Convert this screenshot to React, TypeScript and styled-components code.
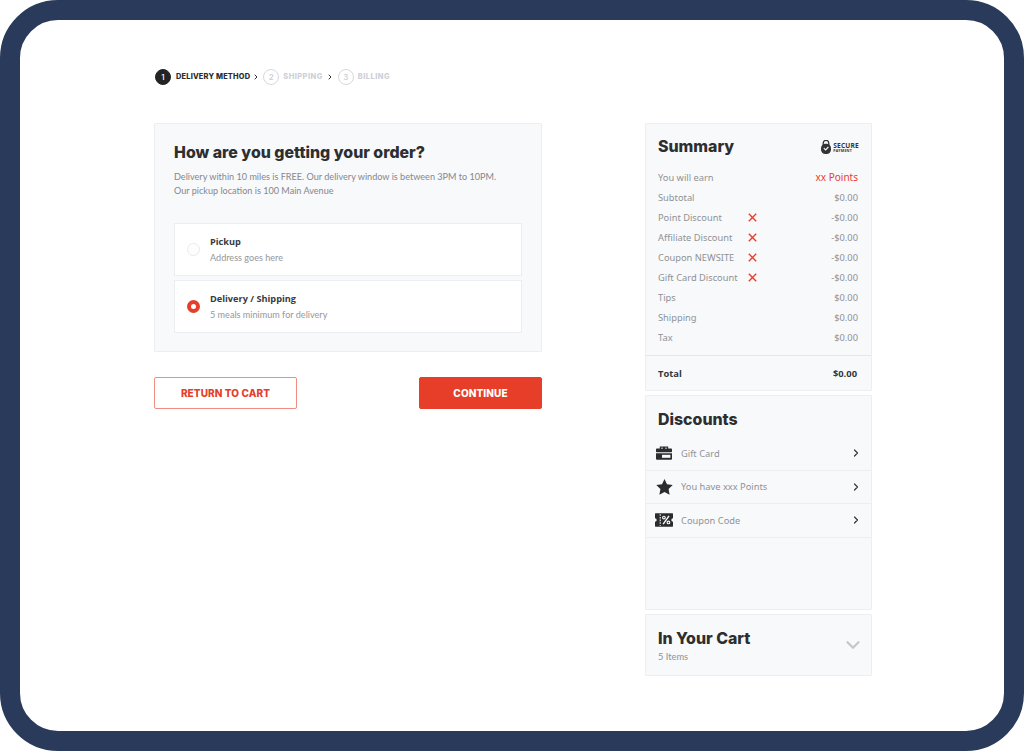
import React from "react";
import styled, { createGlobalStyle } from "styled-components";
import { ChevronDown, ChevronRight } from "lucide-react";

const GlobalStyle = createGlobalStyle`
  html, body {
    margin: 0;
    padding: 0;
    background: #ffffff;
  }
`;

const Frame = styled.div`
  box-sizing: border-box;
  width: 1024px;
  height: 751px;
  border: 20px solid #2a3a5a;
  border-radius: 58px;
  padding: 48px 0 0 134px;
  background: #ffffff;
  font-family: "Lato", sans-serif;
  overflow: hidden;
`;

const Columns = styled.div`
  display: flex;
  align-items: flex-start;
  gap: 103px;
`;

const LeftColumn = styled.div`
  width: 388px;
`;

const RightColumn = styled.div`
  width: 227px;
  margin-top: 55px;
  display: flex;
  flex-direction: column;
  gap: 4px;
`;

const Stepper = styled.div`
  display: flex;
  align-items: center;
  height: 17px;
  margin-bottom: 38px;
`;

const StepNumber = styled.span<{ $active?: boolean }>`
  box-sizing: border-box;
  width: 16px;
  height: 16px;
  margin-left: 1px;
  border-radius: 50%;
  display: flex;
  align-items: center;
  justify-content: center;
  font-size: 8px;
  font-family: "Inter", sans-serif;
  font-weight: 500;
  color: ${(p) => (p.$active ? "#ffffff" : "#c9cbd0")};
  background: ${(p) => (p.$active ? "#232426" : "#ffffff")};
  border: 1px solid ${(p) => (p.$active ? "#232426" : "#d6d8dc")};
`;

const StepLabel = styled.span<{ $active?: boolean }>`
  margin-left: ${(p) => (p.$active ? "5px" : "4px")};
  font-family: "Inter", sans-serif;
  font-size: 7.4px;
  font-weight: 800;
  letter-spacing: ${(p) => (p.$active ? "0.2px" : "0.5px")};
  color: ${(p) => (p.$active ? "#2b2c2e" : "#cdd0d6")};
`;

const StepArrow = styled(ChevronRight)`
  width: 8px;
  height: 8px;
  margin: 0 2px;
  color: #333333;
`;

const WideStepArrow = styled(StepArrow)`
  margin: 0 3px;
`;

const Card = styled.div`
  box-sizing: border-box;
  background: #f8f9fb;
  border: 1px solid #eceef1;
  border-radius: 1px;
`;

const OrderCard = styled(Card)`
  height: 229px;
  padding: 18px 19px;
`;

const Heading = styled.h2`
  margin: 0;
  font-family: "Inter", sans-serif;
  font-weight: 800;
  font-size: 15.9px;
  line-height: 22px;
  color: #2d2e30;
`;

const Description = styled.p`
  margin: 6px 0 25px;
  font-size: 9.1px;
  line-height: 14px;
  color: #85878b;
`;

const OptionList = styled.div`
  display: flex;
  flex-direction: column;
  gap: 4.5px;
`;

const Option = styled.div`
  box-sizing: border-box;
  height: 52.5px;
  background: #ffffff;
  border: 1px solid #eceef1;
  display: flex;
  align-items: center;
  padding-left: 12px;
  gap: 10px;
`;

const Radio = styled.span<{ $checked?: boolean }>`
  box-sizing: border-box;
  flex: none;
  width: 13px;
  height: 13px;
  border-radius: 50%;
  background: ${(p) => (p.$checked ? "#ffffff" : "#fdfdfd")};
  border: ${(p) => (p.$checked ? "4.5px solid #e63e29" : "1px solid #e8e9eb")};
`;

const OptionText = styled.div`
  display: flex;
  flex-direction: column;
  gap: 3px;
`;

const OptionTitle = styled.span`
  font-family: "Open Sans", sans-serif;
  font-size: 9.2px;
  line-height: 13px;
  font-weight: 700;
  color: #3a3b3d;
`;

const OptionSub = styled.span`
  font-size: 9.1px;
  line-height: 13px;
  color: #95979b;
`;

const Actions = styled.div`
  display: flex;
  justify-content: space-between;
  margin-top: 25px;
`;

const Button = styled.button<{ $primary?: boolean }>`
  box-sizing: border-box;
  height: 31.5px;
  width: ${(p) => (p.$primary ? "123px" : "143px")};
  border-radius: 2px;
  border: 1px solid ${(p) => (p.$primary ? "#e63e29" : "#f08c80")};
  background: ${(p) => (p.$primary ? "#e63e29" : "#ffffff")};
  color: ${(p) => (p.$primary ? "#ffffff" : "#e63e29")};
  font-family: "Inter", sans-serif;
  font-size: 10px;
  font-weight: 800;
  letter-spacing: 0.1px;
  padding: 1px 0 0;
`;

const SummaryCard = styled(Card)`
  height: 268px;
  padding-top: 12px;
`;

const CardTitle = styled.div`
  display: flex;
  align-items: center;
  justify-content: space-between;
  padding: 0 12px;
  height: 22px;
`;

const Rows = styled.div`
  margin-top: 9px;
  padding: 0 13px 0 12px;
`;

const Row = styled.div`
  height: 20px;
  display: flex;
  align-items: center;
  font-family: "Noto Sans", sans-serif;
  font-size: 9.3px;
  color: #8f9195;
`;

const RowLabel = styled.span`
  width: 90px;
`;

const RemoveIcon = styled.svg`
  width: 9px;
  height: 9px;
  fill: none;
  stroke: #e8402c;
  stroke-width: 1.4;
`;

const RowValue = styled.span<{ $accent?: boolean }>`
  margin-left: auto;
  color: ${(p) => (p.$accent ? "#e8402c" : "#8f9195")};
  font-size: ${(p) => (p.$accent ? "10px" : "9.3px")};
`;

const TotalRow = styled.div`
  box-sizing: border-box;
  margin-top: 8px;
  height: 36px;
  padding: 0 14px 0 12px;
  border-top: 1px solid #e4e6e9;
  display: flex;
  align-items: center;
  justify-content: space-between;
  font-family: "Open Sans", sans-serif;
  font-size: 9.4px;
  font-weight: 700;
  color: #36373a;
`;

const Secure = styled.div`
  display: flex;
  align-items: center;
  gap: 2px;
`;

const SecureText = styled.div`
  display: flex;
  flex-direction: column;
  font-family: "Open Sans", sans-serif;
  color: #333436;
  font-weight: 700;
`;

const SecureWord = styled.span`
  font-size: 6.6px;
  line-height: 7px;
  letter-spacing: 0.2px;
`;

const PaymentWord = styled.span`
  font-size: 3.6px;
  line-height: 4px;
  letter-spacing: 0.2px;
`;

const DiscountCard = styled(Card)`
  height: 215px;
  padding-top: 13px;
`;

const DiscountList = styled.div`
  margin-top: 6px;
`;

const DiscountRow = styled.div`
  box-sizing: border-box;
  height: 33.5px;
  display: flex;
  align-items: center;
  padding: 0 9px;
  border-bottom: 1px solid #eceef1;
`;

const DiscountIcon = styled.span`
  width: 18px;
  height: 18px;
  display: flex;
  align-items: center;
  justify-content: center;
  margin-right: 8px;
`;

const DiscountLabel = styled.span`
  font-family: "Noto Sans", sans-serif;
  font-size: 9.3px;
  color: #909296;
`;

const Arrow = styled(ChevronRight)`
  margin-left: auto;
  width: 12px;
  height: 12px;
  color: #333436;
`;

const CartCard = styled(Card)`
  height: 62px;
  padding: 13px 12px 0;
  display: flex;
  justify-content: space-between;
`;

const CartSub = styled.div`
  font-size: 9.3px;
  line-height: 13px;
  color: #8f9195;
`;

const CartChevron = styled(ChevronDown)`
  width: 22px;
  height: 22px;
  margin: 6px -5px 0 0;
  color: #c5c7cb;
`;

const rows = [
  { label: "Subtotal", value: "$0.00" },
  { label: "Point Discount", value: "-$0.00", removable: true },
  { label: "Affiliate Discount", value: "-$0.00", removable: true },
  { label: "Coupon NEWSITE", value: "-$0.00", removable: true },
  { label: "Gift Card Discount", value: "-$0.00", removable: true },
  { label: "Tips", value: "$0.00" },
  { label: "Shipping", value: "$0.00" },
  { label: "Tax", value: "$0.00" },
];

const LockIcon = () => (
  <svg width="10" height="14" viewBox="0 0 10 14">
    <path d="M2.2 5V3.2a2.8 2.8 0 0 1 5.6 0V5" fill="none" stroke="#333436" strokeWidth="1.3" />
    <rect x="0" y="3.8" width="10" height="10.2" rx="4.4" fill="#333436" />
    <path d="M2.8 8.2l1.8 1.8 2.8-3" fill="none" stroke="#f8f9fb" strokeWidth="1.1" />
  </svg>
);

const GiftIcon = () => (
  <svg width="16" height="14" viewBox="0 0 16 14">
    <path d="M4.4 3V1.2h3.2V3M8.4 3V1.2h3.2V3" fill="none" stroke="#2b2c2e" strokeWidth="1.2" />
    <rect y="2.6" width="16" height="3.6" rx="0.8" fill="#2b2c2e" />
    <path d="M0 7.2h16v5.6a1 1 0 0 1-1 1H1a1 1 0 0 1-1-1z" fill="#2b2c2e" />
    <rect x="6" y="8.8" width="8.4" height="3" fill="#f8f9fb" />
  </svg>
);

const StarIcon = () => (
  <svg width="17" height="16" viewBox="0 0 17 16">
    <path d="M8.5 0l2.5 5.2 5.7.8-4.1 4 1 5.7-5.1-2.7-5.1 2.7 1-5.7L.3 6l5.7-.8z" fill="#2b2c2e" />
  </svg>
);

const CouponIcon = () => (
  <svg width="19" height="14" viewBox="0 0 19 14">
    <path d="M.6 0h17.8a.6.6 0 0 1 .6.6v4.6a1.8 1.8 0 0 0 0 3.6v4.6a.6.6 0 0 1-.6.6H.6a.6.6 0 0 1-.6-.6V8.8a1.8 1.8 0 0 0 0-3.6V.6A.6.6 0 0 1 .6 0z" fill="#2b2c2e" />
    <path d="M5.5 1v12" stroke="#f8f9fb" strokeWidth="1.2" strokeDasharray="1.6 1.2" />
    <path d="M8.6 11.4l6.2-8.8" stroke="#f8f9fb" strokeWidth="1.5" />
    <circle cx="9.4" cy="4.4" r="1.4" fill="none" stroke="#f8f9fb" strokeWidth="1.2" />
    <circle cx="14.2" cy="9.6" r="1.4" fill="none" stroke="#f8f9fb" strokeWidth="1.2" />
  </svg>
);

function App() {
  return (
    <Frame>
      <GlobalStyle />
      <Columns>
        <LeftColumn>
          <Stepper>
            <StepNumber $active>1</StepNumber>
            <StepLabel $active>DELIVERY METHOD</StepLabel>
            <StepArrow strokeWidth={3} />
            <StepNumber>2</StepNumber>
            <StepLabel>SHIPPING</StepLabel>
            <WideStepArrow strokeWidth={3} />
            <StepNumber>3</StepNumber>
            <StepLabel>BILLING</StepLabel>
          </Stepper>
          <OrderCard>
            <Heading>How are you getting your order?</Heading>
            <Description>
              Delivery within 10 miles is FREE. Our delivery window is between
              3PM to 10PM.
              <br />
              Our pickup location is 100 Main Avenue
            </Description>
            <OptionList>
              <Option>
                <Radio />
                <OptionText>
                  <OptionTitle>Pickup</OptionTitle>
                  <OptionSub>Address goes here</OptionSub>
                </OptionText>
              </Option>
              <Option>
                <Radio $checked />
                <OptionText>
                  <OptionTitle>Delivery / Shipping</OptionTitle>
                  <OptionSub>5 meals minimum for delivery</OptionSub>
                </OptionText>
              </Option>
            </OptionList>
          </OrderCard>
          <Actions>
            <Button>RETURN TO CART</Button>
            <Button $primary>CONTINUE</Button>
          </Actions>
        </LeftColumn>
        <RightColumn>
          <SummaryCard>
            <CardTitle>
              <Heading>Summary</Heading>
              <Secure>
                <LockIcon />
                <SecureText>
                  <SecureWord>SECURE</SecureWord>
                  <PaymentWord>PAYMENT</PaymentWord>
                </SecureText>
              </Secure>
            </CardTitle>
            <Rows>
              <Row>
                <RowLabel>You will earn</RowLabel>
                <RowValue $accent>xx Points</RowValue>
              </Row>
              {rows.map((row) => (
                <Row key={row.label}>
                  <RowLabel>{row.label}</RowLabel>
                  {row.removable && (
                    <RemoveIcon viewBox="0 0 9 9">
                      <path d="M.8.8l7.4 7.4M8.2.8L.8 8.2" />
                    </RemoveIcon>
                  )}
                  <RowValue>{row.value}</RowValue>
                </Row>
              ))}
            </Rows>
            <TotalRow>
              <span>Total</span>
              <span>$0.00</span>
            </TotalRow>
          </SummaryCard>
          <DiscountCard>
            <CardTitle>
              <Heading>Discounts</Heading>
            </CardTitle>
            <DiscountList>
              <DiscountRow>
                <DiscountIcon>
                  <GiftIcon />
                </DiscountIcon>
                <DiscountLabel>Gift Card</DiscountLabel>
                <Arrow strokeWidth={2.4} />
              </DiscountRow>
              <DiscountRow>
                <DiscountIcon>
                  <StarIcon />
                </DiscountIcon>
                <DiscountLabel>You have xxx Points</DiscountLabel>
                <Arrow strokeWidth={2.4} />
              </DiscountRow>
              <DiscountRow>
                <DiscountIcon>
                  <CouponIcon />
                </DiscountIcon>
                <DiscountLabel>Coupon Code</DiscountLabel>
                <Arrow strokeWidth={2.4} />
              </DiscountRow>
            </DiscountList>
          </DiscountCard>
          <CartCard>
            <div>
              <Heading>In Your Cart</Heading>
              <CartSub>5 Items</CartSub>
            </div>
            <CartChevron strokeWidth={2.4} />
          </CartCard>
        </RightColumn>
      </Columns>
    </Frame>
  );
}

export default App;
